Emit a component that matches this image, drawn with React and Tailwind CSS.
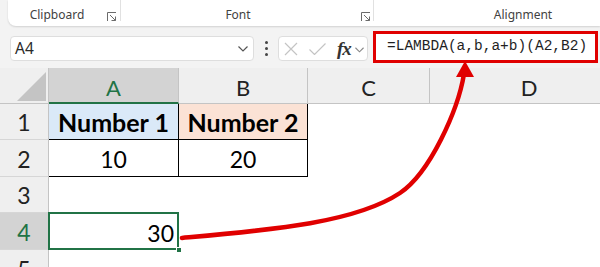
import React from "react";

function Launcher({ className = "" }) {
  return (
    <svg className={className} width="10" height="10" viewBox="0 0 10 10">
      <path d="M0.5 9V0.5H9" stroke="#6b6b6b" strokeWidth="1" fill="none" />
      <path d="M3 3L8.5 8.5M8.5 4.5V8.5H4.5" stroke="#6b6b6b" strokeWidth="1" fill="none" />
    </svg>
  );
}

function Chevron({ w = 10, color = "#555" }) {
  return (
    <svg width={w} height="6" viewBox="0 0 10 6">
      <polyline points="0.5,0.5 5,5 9.5,0.5" stroke={color} strokeWidth="1.2" fill="none" />
    </svg>
  );
}

const lato = "font-['Lato',sans-serif]";

function RowHead({ n, h, selected }) {
  return (
    <div
      className={`w-[49px] shrink-0 flex items-center justify-center pt-[2px] border-r border-b border-r-[#c4c4c4] border-b-[#d6d6d6] text-[23px] ${lato} ${
        selected ? "bg-[#d3d3d3] text-[#217346]" : "bg-[#efefef] text-[#222]"
      } ${h}`}
    >
      {n}
    </div>
  );
}

export default function App() {
  return (
    <div className="relative w-[600px] h-[267px] overflow-hidden bg-[#f3f3f3]">
      {/* Ribbon */}
      <div className="flex h-[26px]">
        <div className="w-[8px] shrink-0" />
        <div className="flex-1 flex items-start bg-white rounded-bl-[8px] shadow-[0_1px_2px_rgba(0,0,0,0.14)] font-['Noto_Sans',sans-serif] text-[12px] leading-[14px] text-[#424242] overflow-hidden">
          <div className="w-[98px] shrink-0 text-center pt-[8px]">Clipboard</div>
          <Launcher className="ml-[1px] mt-[12px] shrink-0" />
          <div className="w-[3px] shrink-0" />
          <div className="w-px h-[21px] bg-[#e1e1e1] shrink-0" />
          <div className="w-[234px] shrink-0 text-center pt-[8px]">Font</div>
          <Launcher className="ml-[6px] mt-[12px] shrink-0" />
          <div className="w-[2px] shrink-0" />
          <div className="w-px h-[21px] bg-[#e1e1e1] shrink-0" />
          <div className="w-[298px] shrink-0 text-center pt-[8px]">Alignment</div>
        </div>
      </div>

      {/* Formula bar */}
      <div className="flex items-start pt-[5px] h-[37px]">
        <div className="w-[10px] shrink-0" />
        <div className="mt-[5px] w-[244px] h-[25px] shrink-0 bg-white border border-[#dedede] rounded-[4px] flex items-center pl-[4px] pr-[5px]">
          <span className="flex-1 text-[15.5px] text-[#2a2a2a] font-['Noto_Sans',sans-serif]">A4</span>
          <Chevron />
        </div>
        <div className="mt-[5px] w-[24px] h-[25px] shrink-0 flex flex-col items-center justify-center gap-[3px]">
          <div className="w-[3px] h-[3px] rounded-full bg-[#444]" />
          <div className="w-[3px] h-[3px] rounded-full bg-[#444]" />
          <div className="w-[3px] h-[3px] rounded-full bg-[#444]" />
        </div>
        <div className="mt-[5px] w-[90px] h-[25px] shrink-0 bg-white border border-[#dedede] rounded-[4px] flex items-center pl-[5px]">
          <svg width="14" height="14" viewBox="0 0 14 14" className="shrink-0">
            <path d="M1 1L13 13M13 1L1 13" stroke="#c4c4c4" strokeWidth="1.2" fill="none" />
          </svg>
          <svg width="17" height="12" viewBox="0 0 17 12" className="ml-[11px] shrink-0">
            <polyline points="0.5,6.5 5.5,11.5 16.5,0.5" stroke="#c4c4c4" strokeWidth="1.2" fill="none" />
          </svg>
          <span className="ml-[11px] font-['Liberation_Serif',serif] italic font-bold text-[19px] leading-[20px] text-[#333] tracking-[-1px]">fx</span>
          <div className="ml-[4px] mt-[2px]">
            <Chevron w={9} color="#888" />
          </div>
        </div>
        <div className="w-[5px] shrink-0" />
        <div className="w-[225px] h-[32px] shrink-0 border-[3px] border-[#e00000] bg-white flex items-center pl-[11px] font-['Liberation_Mono',monospace] text-[14.5px] text-[#1f1f1f] whitespace-nowrap overflow-hidden">
          =LAMBDA(a,b,a+b)(A2,B2)
        </div>
      </div>

      {/* Grid */}
      <div className="mt-[5px] flex flex-col">
        {/* Header row */}
        <div className={`flex h-[36px] text-[22px] ${lato}`}>
          <div className="w-[49px] shrink-0 border-r border-b border-[#c4c4c4] bg-[#efefef]">
            <svg width="48" height="35" viewBox="0 0 48 35">
              <polygon points="17,33 46,33 46,4" fill="#c4c4c4" />
            </svg>
          </div>
          <div className="w-[130px] shrink-0 bg-[#d3d3d3] border-b-2 border-b-[#217346] border-r border-r-[#c4c4c4] flex items-center justify-center pt-[4px] text-[#217346]">
            A
          </div>
          <div className="w-[129px] shrink-0 bg-[#efefef] border-b border-r border-[#c4c4c4] flex items-center justify-center pt-[4px] text-[#222]">
            B
          </div>
          <div className="w-[122px] shrink-0 bg-[#efefef] border-b border-r border-[#c4c4c4] flex items-center justify-center pt-[4px] text-[#222]">
            C
          </div>
          <div className="w-[198px] shrink-0 bg-[#efefef] border-b border-[#c4c4c4] flex items-center justify-center pt-[4px] text-[#222]">
            D
          </div>
        </div>

        {/* Row 1 */}
        <div className="flex h-[36px] bg-white">
          <RowHead n="1" h="h-[36px]" />
          <div className={`w-[130px] shrink-0 bg-[#dae9f8] border-r border-b border-black flex items-center justify-center pt-[2px] font-bold text-[25px] text-black ${lato}`}>
            Number 1
          </div>
          <div className={`w-[129px] shrink-0 bg-[#fbe2d5] border-r border-b border-black flex items-center justify-center pt-[2px] font-bold text-[25px] text-black ${lato}`}>
            Number 2
          </div>
          <div className="flex-1" />
        </div>

        {/* Row 2 */}
        <div className="flex h-[37px] bg-white">
          <RowHead n="2" h="h-[37px]" />
          <div className={`w-[130px] shrink-0 border-r border-b border-black flex items-center justify-center pt-[2px] text-[23px] text-black ${lato}`}>
            10
          </div>
          <div className={`w-[129px] shrink-0 border-r border-b border-black flex items-center justify-center pt-[2px] text-[23px] text-black ${lato}`}>
            20
          </div>
          <div className="flex-1" />
        </div>

        {/* Row 3 */}
        <div className="flex h-[36px] bg-white">
          <RowHead n="3" h="h-[36px]" />
          <div className="flex-1" />
        </div>

        {/* Row 4 */}
        <div className="flex h-[37px] bg-white">
          <RowHead n="4" h="h-[37px]" selected />
          <div className={`relative w-[130px] shrink-0 flex items-center justify-end pr-[5px] pt-[3px] text-[23px] text-black ${lato}`}>
            30
            <div className="absolute left-[-1px] top-[-1px] w-[131px] h-[38px] border-2 border-[#217346]" />
            <div className="absolute left-[127px] top-[34px] w-[6px] h-[6px] bg-[#217346] border border-white" />
          </div>
          <div className="flex-1" />
        </div>

        {/* Row 5 */}
        <div className="flex h-[37px] bg-white">
          <RowHead n="5" h="h-[37px]" />
          <div className="flex-1" />
        </div>
      </div>

      {/* Arrow overlay */}
      <svg className="absolute left-0 top-0 pointer-events-none" width="600" height="267" viewBox="0 0 600 267">
        <path
          d="M182 238 C 270 230, 355 223, 400 193 C 430 173, 458 110, 464 74"
          stroke="#e00000"
          strokeWidth="4.5"
          fill="none"
          strokeLinecap="round"
        />
        <polygon points="465,61 456,77 474,77" fill="#e00000" />
      </svg>
    </div>
  );
}
